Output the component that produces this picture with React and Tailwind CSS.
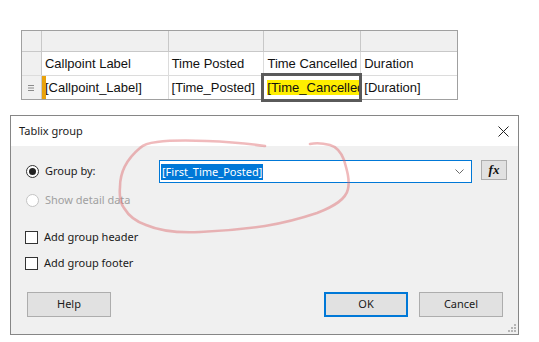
const cols = [127, 96, 97, 96];

const Radio = ({ checked, disabled }) => (
  <span
    className={`w-[13px] h-[13px] rounded-full border flex items-center justify-center bg-white ${
      disabled ? 'border-[#c4c4c4] bg-[#f7f7f7]' : 'border-[#333]'
    }`}
  >
    {checked && <span className="w-[7px] h-[7px] rounded-full bg-[#222]" />}
  </span>
);

const Checkbox = ({ label, className = '' }) => (
  <div className={`flex items-center h-[16px] ${className}`}>
    <span className="w-[13px] h-[13px] border border-[#333] bg-white" />
    <span className="ml-[6px] text-[#1a1a1a]">{label}</span>
  </div>
);

const Button = ({ children, primary, className = '' }) => (
  <button
    className={`h-[25px] w-[84px] bg-[#e1e1e1] text-[#1a1a1a] ${
      primary ? 'border-2 border-[#0078d7]' : 'border border-[#adadad]'
    } ${className}`}
  >
    {children}
  </button>
);

export default function App() {
  return (
    <div className="relative w-[539px] h-[342px] bg-white overflow-hidden font-['Liberation_Sans',Arial,sans-serif]">
      {/* Report table */}
      <div className="ml-[21px] pt-[30px]">
        <div className="w-[437px] border border-[#a0a0a0] text-[13px] text-[#111]">
          <div className="flex h-[21px] bg-[#f0f0f0] border-b border-[#c8c8c8]">
            <div className="w-[20px] border-r border-[#c8c8c8]" />
            {cols.map((w, i) => (
              <div key={i} style={{ width: w }} className={i < 3 ? 'border-r border-[#c8c8c8]' : ''} />
            ))}
          </div>
          <div className="flex h-[24px] border-b border-[#dcdcdc]">
            <div className="w-[20px] bg-[#f0f0f0] border-r border-[#c8c8c8]" />
            {['Callpoint Label', 'Time Posted', 'Time Cancelled', 'Duration'].map((t, i) => (
              <div
                key={t}
                style={{ width: cols[i] }}
                className={`flex items-center pl-[3px] whitespace-nowrap ${i < 3 ? 'border-r border-[#dcdcdc]' : ''}`}
              >
                {t}
              </div>
            ))}
          </div>
          <div className="flex h-[23px]">
            <div className="w-[20px] bg-[#f0f0f0] border-r border-[#c8c8c8] flex items-center justify-center">
              <svg width="8" height="8" viewBox="0 0 8 8">
                <path d="M1 1.5h6M1 4h6M1 6.5h6" stroke="#8a8a8a" strokeWidth="1" />
              </svg>
            </div>
            <div style={{ width: cols[0] }} className="relative flex items-center pl-[3px] border-r border-[#dcdcdc] whitespace-nowrap">
              <span className="absolute left-0 top-0 bottom-0 w-[4px] bg-[#e8a20c]" />
              [Callpoint_Label]
            </div>
            <div style={{ width: cols[1] }} className="flex items-center pl-[3px] border-r border-[#dcdcdc] whitespace-nowrap">
              [Time_Posted]
            </div>
            <div style={{ width: cols[2] }} className="relative flex items-center pl-[3px] border-r border-[#dcdcdc]">
              <span className="overflow-hidden whitespace-nowrap w-[93px]">
                <span className="bg-[#ffee00]">[Time_Cancelled]</span>
              </span>
              <span className="absolute -left-[3px] -right-[2px] -top-[3px] -bottom-[3px] border-[3px] border-[#5a5a5a]" />
            </div>
            <div style={{ width: cols[3] }} className="flex items-center pl-[3px] whitespace-nowrap">
              [Duration]
            </div>
          </div>
        </div>
      </div>

      {/* Tablix group dialog */}
      <div className="ml-[10px] mt-[15px] w-[509px] h-[220px] border border-[#868686] bg-[#f0f0f0] font-['Noto_Sans',sans-serif] text-[11px] text-[#1a1a1a] relative">
        <div className="h-[30px] bg-white flex items-center justify-between pl-[8px] pr-[9px]">
          <span className="mt-[1px]">Tablix group</span>
          <svg width="11" height="11" viewBox="0 0 11 11">
            <path d="M0.5 0.5L10.5 10.5M10.5 0.5L0.5 10.5" stroke="#222" strokeWidth="1" />
          </svg>
        </div>

        <div className="pl-[14px] pr-[11px]">
          <div className="flex items-center h-[23px] mt-[14px]">
            <div className="w-[134px] flex items-center">
              <span className="ml-[1px]"><Radio checked /></span>
              <span className="ml-[6px]">Group by:</span>
            </div>
            <div className="w-[313px] h-[23px] border border-[#0078d7] bg-white flex items-center justify-between pl-[1px] pr-[7px]">
              <span className="bg-[#0078d7] text-white leading-[16px] px-[1px]">[First_Time_Posted]</span>
              <svg width="9" height="6" viewBox="0 0 9 6">
                <path d="M0.5 0.5L4.5 4.5L8.5 0.5" stroke="#6a6a6a" strokeWidth="1" fill="none" />
              </svg>
            </div>
            <div className="ml-[9px] w-[26px] h-[20px] -mt-[3px] bg-[#e1e1e1] border border-[#adadad] flex items-center justify-center font-['Liberation_Serif',serif] italic font-bold text-[13px] text-[#111]">
              fx
            </div>
          </div>

          <div className="flex items-center h-[16px] mt-[9px]">
            <span className="ml-[1px]"><Radio disabled /></span>
            <span className="ml-[6px] text-[#a0a0a0]">Show detail data</span>
          </div>

          <Checkbox label="Add group header" className="mt-[21px]" />
          <Checkbox label="Add group footer" className="mt-[10px]" />

          <div className="flex items-center mt-[21px]">
            <Button className="ml-[2px]">Help</Button>
            <div className="flex-1" />
            <Button primary>OK</Button>
            <Button className="ml-[11px] mr-[4px]">Cancel</Button>
          </div>
        </div>

        <svg className="absolute right-[2px] bottom-[2px]" width="8" height="8" viewBox="0 0 8 8">
          <g fill="#b5b5b5">
            <rect x="6" y="0" width="2" height="2" />
            <rect x="3" y="3" width="2" height="2" />
            <rect x="6" y="3" width="2" height="2" />
            <rect x="0" y="6" width="2" height="2" />
            <rect x="3" y="6" width="2" height="2" />
            <rect x="6" y="6" width="2" height="2" />
          </g>
        </svg>
      </div>

      {/* Hand-drawn annotation circle */}
      <svg className="absolute left-0 top-0 pointer-events-none" width="539" height="342" viewBox="0 0 539 342">
        <path
          d="M265 146 C230 141, 180 139, 157 142 C148 143, 143 145, 140 148 C128 158, 120 172, 120 187 C119 198, 121 204, 124 208 C130 218, 137 222, 146 225 C160 231, 180 233, 200 232 C225 231, 245 229, 265 226 C290 222, 305 217, 317 213 C335 206, 346 199, 348 189 C350 180, 347 170, 344 160 C341 152, 337 147, 330 145 C322 143, 315 143, 310 144"
          fill="none"
          stroke="rgba(220,90,95,0.42)"
          strokeWidth="2.6"
          strokeLinecap="round"
        />
      </svg>
    </div>
  );
}
